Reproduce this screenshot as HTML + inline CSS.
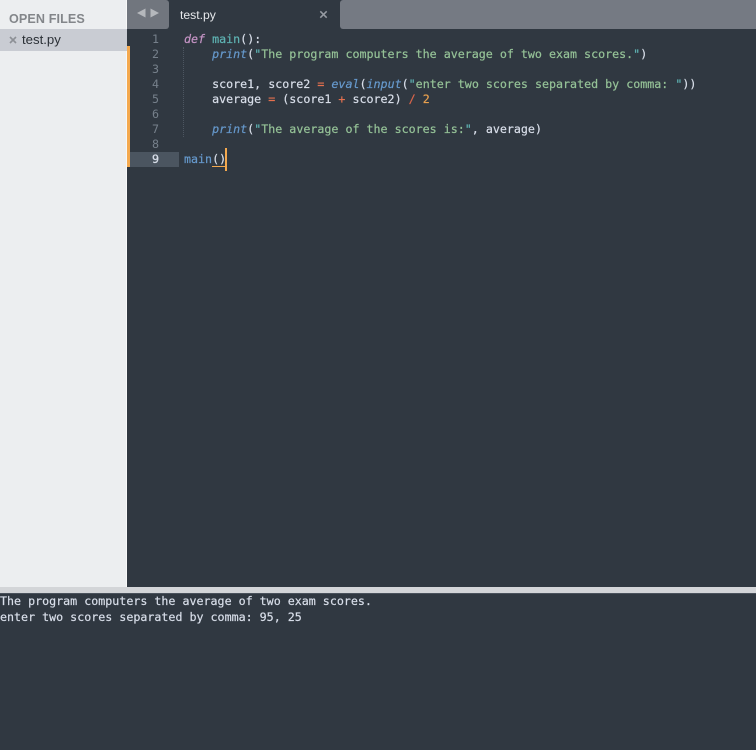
<!DOCTYPE html>
<html>
<head>
<meta charset="utf-8">
<style>
html,body{margin:0;padding:0;background:#303841;}
#root{position:relative;width:756px;height:750px;overflow:hidden;background:#303841;font-family:"Liberation Sans",sans-serif;}
.abs{position:absolute;}
.code,.term,.ln{font:11.66px/15px "DejaVu Sans Mono",monospace;-webkit-text-stroke:.2px;filter:blur(.25px);}
.code{position:absolute;left:184px;white-space:pre;color:#d8dee9;}
.ln{position:absolute;left:130px;width:29px;text-align:right;color:#76808b;-webkit-text-stroke:0;}
.k{color:#c594c5;font-style:italic}
.f{color:#5fb4b4}
.b{color:#6699cc;font-style:italic}
.s{color:#95c297}
.q{color:#5fb4b4}
.o{color:#e5714f}
.r{color:#d9654b}
.n{color:#e8a04f}
.m{color:#6699cc}
.term{position:absolute;left:0;white-space:pre;color:#d8dee9;}
</style>
</head>
<body>
<div id="root">
  <!-- sidebar -->
  <div class="abs" style="left:0;top:0;width:126px;height:587px;background:#eceef0;"></div>
  <div class="abs" style="left:126px;top:0;width:1px;height:587px;background:#f8f8f8;"></div>
  <div class="abs" style="left:9px;top:11px;font-size:12.6px;line-height:16px;font-weight:bold;color:#83868a;letter-spacing:.1px;">OPEN FILES</div>
  <div class="abs" style="left:0;top:29px;width:127px;height:22px;background:#c9ccd3;"></div>
  <svg class="abs" style="left:9px;top:36px" width="8" height="8" viewBox="0 0 8 8"><path d="M1 1L7 7M7 1L1 7" stroke="#8d9096" stroke-width="1.6" fill="none"/></svg>
  <div class="abs" style="left:22px;top:32px;font-size:13.2px;line-height:16px;color:#2b3036;">test.py</div>

  <!-- tab bar -->
  <div class="abs" style="left:127px;top:0;width:42px;height:29px;background:#71767e;border-radius:0 3px 3px 0;"></div>
  <div class="abs" style="left:340px;top:0;width:416px;height:29px;background:#757a83;border-radius:3px 0 0 3px;"></div>
  <svg class="abs" style="left:135px;top:7px" width="26" height="12" viewBox="0 0 26 12"><path d="M10.5 1.5V10.5L2 6Z" fill="#b5b8bc"/><path d="M15.5 1.5V10.5L24 6Z" fill="#b5b8bc"/></svg>
  <div class="abs" style="left:180px;top:7px;font-size:12.2px;line-height:16px;color:#e6e8eb;">test.py</div>
  <svg class="abs" style="left:319px;top:10px" width="9" height="9" viewBox="0 0 9 9"><path d="M1.3 1.3L7.7 7.7M7.7 1.3L1.3 7.7" stroke="#969ba2" stroke-width="1.5" fill="none"/></svg>

  <!-- gutter -->
  <div class="abs" style="left:127px;top:46px;width:3px;height:121px;background:#f4a94f;"></div>
  <div class="abs" style="left:130px;top:152px;width:49px;height:15px;background:#4b5560;"></div>
  <div class="abs" style="left:183px;top:47px;width:0;height:90px;border-left:1px dotted #4d5661;"></div>

  <div class="ln" style="top:32px">1</div>
  <div class="ln" style="top:47px">2</div>
  <div class="ln" style="top:62px">3</div>
  <div class="ln" style="top:77px">4</div>
  <div class="ln" style="top:92px">5</div>
  <div class="ln" style="top:107px">6</div>
  <div class="ln" style="top:122px">7</div>
  <div class="ln" style="top:137px">8</div>
  <div class="ln" style="top:152px;color:#d8dee9;-webkit-text-stroke:.3px">9</div>

  <!-- code -->
  <div class="code" style="top:32px"><span class="k">def</span> <span class="f">main</span>():</div>
  <div class="code" style="top:47px">    <span class="b">print</span>(<span class="q">"</span><span class="s">The program computers the average of two exam scores.</span><span class="q">"</span>)</div>
  <div class="code" style="top:77px">    score1, score2 <span class="o">=</span> <span class="b">eval</span>(<span class="b">input</span>(<span class="q">"</span><span class="s">enter two scores separated by comma: </span><span class="q">"</span>))</div>
  <div class="code" style="top:92px">    average <span class="o">=</span> (score1 <span class="o">+</span> score2) <span class="r">/</span> <span class="n">2</span></div>
  <div class="code" style="top:122px">    <span class="b">print</span>(<span class="q">"</span><span class="s">The average of the scores is:</span><span class="q">"</span>, average)</div>
  <div class="code" style="top:152px"><span class="m">main</span>()</div>

  <!-- bracket underline + caret -->
  <div class="abs" style="left:212px;top:166px;width:13px;height:1px;background:#f4a94f;"></div>
  <div class="abs" style="left:225px;top:148px;width:2px;height:23px;background:#f4a94f;"></div>

  <!-- panel separator -->
  <div class="abs" style="left:0;top:587px;width:756px;height:6px;background:#d3d5d8;"></div>
  <div class="abs" style="left:0;top:593px;width:756px;height:1px;background:#4a525c;"></div>

  <!-- terminal -->
  <div class="term" style="top:594px">The program computers the average of two exam scores.</div>
  <div class="term" style="top:610px">enter two scores separated by comma: 95, 25</div>
</div>
</body>
</html>
